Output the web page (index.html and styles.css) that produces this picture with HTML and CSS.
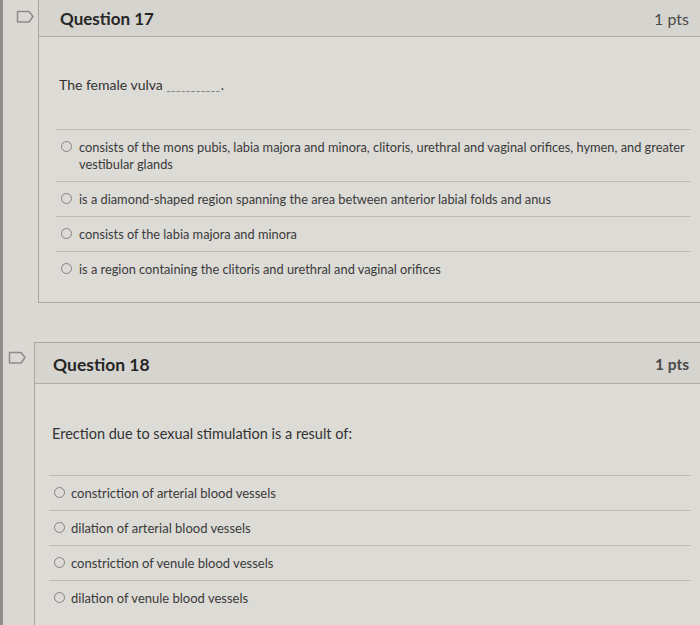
FILE: index.html
```html
<!DOCTYPE html>
<html lang="en">
<head>
<meta charset="utf-8">
<title>Quiz</title>
<link rel="stylesheet" href="styles.css">
</head>
<body>
<div class="page">
  <section class="question q17">
    <div class="flag">
      <svg width="19" height="14" viewBox="0 0 19 14"><path d="M1.5 1.5 H13 L17 6.5 L13 12 H1.5 Z" fill="none" stroke="#8e8c88" stroke-width="1.5" stroke-linejoin="round"/></svg>
    </div>
    <div class="card">
      <header class="card-head">
        <h2 class="title">Question 17</h2>
        <span class="pts">1 pts</span>
      </header>
      <div class="card-body">
        <p class="prompt">The female vulva <span class="blank">___________</span>.</p>
        <ul class="answers">
          <li class="answer"><span class="radio"></span><span class="label">consists of the mons pubis, labia majora and minora, clitoris, urethral and vaginal orifices, hymen, and greater vestibular glands</span></li>
          <li class="answer"><span class="radio"></span><span class="label">is a diamond-shaped region spanning the area between anterior labial folds and anus</span></li>
          <li class="answer"><span class="radio"></span><span class="label">consists of the labia majora and minora</span></li>
          <li class="answer"><span class="radio"></span><span class="label">is a region containing the clitoris and urethral and vaginal orifices</span></li>
        </ul>
      </div>
    </div>
  </section>

  <section class="question q18">
    <div class="flag">
      <svg width="19" height="14" viewBox="0 0 19 14"><path d="M1.5 1.5 H13 L17 6.5 L13 12 H1.5 Z" fill="none" stroke="#8e8c88" stroke-width="1.5" stroke-linejoin="round"/></svg>
    </div>
    <div class="card">
      <header class="card-head">
        <h2 class="title">Question 18</h2>
        <span class="pts">1 pts</span>
      </header>
      <div class="card-body">
        <p class="prompt">Erection due to sexual stimulation is a result of:</p>
        <ul class="answers">
          <li class="answer"><span class="radio"></span><span class="label">constriction of arterial blood vessels</span></li>
          <li class="answer"><span class="radio"></span><span class="label">dilation of arterial blood vessels</span></li>
          <li class="answer"><span class="radio"></span><span class="label">constriction of venule blood vessels</span></li>
          <li class="answer"><span class="radio"></span><span class="label">dilation of venule blood vessels</span></li>
        </ul>
      </div>
    </div>
  </section>
</div>
</body>
</html>
```

FILE: styles.css
```css
html, body {
  margin: 0;
  padding: 0;
}

body {
  width: 700px;
  height: 625px;
  overflow: hidden;
  background: #dbd9d4;
  font-family: Lato, "Open Sans", sans-serif;
  color: #3a3a3a;
  border-left: 3px solid #8f8d89;
  box-sizing: border-box;
}

.page {
  display: flex;
  flex-direction: column;
  gap: 39px;
  margin-top: -1px;
}

.question {
  display: flex;
  align-items: flex-start;
}

.flag {
  display: flex;
}

.q17 .flag {
  margin: 11px 0 0 13px;
  width: 22px;
}

.q18 .flag {
  margin: 9px 0 0 5px;
  width: 26px;
}

.card {
  flex: 1;
  margin-right: -12px;
  border: 1px solid #a9a7a2;
  background: #dddbd6;
}

.card-head {
  display: flex;
  justify-content: space-between;
  align-items: center;
  height: 37px;
  padding: 0 22px 0 21px;
  background: #d6d4cf;
  border-bottom: 1px solid #aeaca7;
  box-sizing: border-box;
}

.q18 .card-head {
  height: 41px;
  padding-left: 18px;
  padding-top: 2px;
}

.title {
  margin: 0;
  font-size: 17px;
  font-weight: 700;
  color: #262626;
}

.q18 .title {
  font-size: 17.5px;
}

.pts {
  font-size: 16px;
  color: #4a4a4a;
}

.q18 .pts {
  font-weight: 700;
  font-size: 15.5px;
}

.card-body {
  padding: 38px 20px 16px 17px;
}

.q18 .card-body {
  padding: 40px 20px 16px 14px;
}

.prompt {
  margin: 0 0 32px 3px;
  font-size: 14px;
  line-height: 20px;
  color: #333;
}

.q18 .prompt {
  font-size: 14.5px;
  margin-bottom: 31px;
}

.blank {
  letter-spacing: 0.8px;
  font-size: 9px;
  color: #555;
}

.answers {
  list-style: none;
  margin: 0;
  padding: 0;
}

.answer {
  display: flex;
  align-items: flex-start;
  gap: 7px;
  padding: 9px 0 8px 5px;
  border-top: 1px solid #bebcb7;
  font-size: 12.8px;
  line-height: 17px;
  color: #3a3a3a;
}

.q18 .answer {
  font-size: 13px;
  gap: 6px;
}

.radio {
  flex: none;
  width: 9px;
  height: 9px;
  margin-top: 2px;
  border: 1.5px solid #858380;
  border-radius: 50%;
}

.label {
  flex: 1;
}
```
